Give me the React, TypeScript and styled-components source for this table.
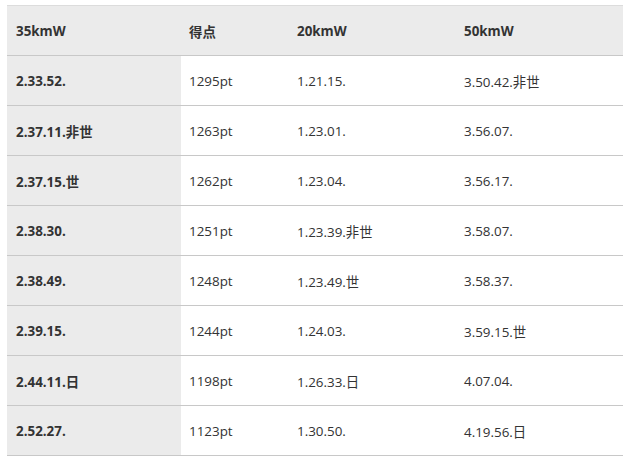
import React from "react";
import styled, { createGlobalStyle } from "styled-components";

const Global = createGlobalStyle`
  html, body { margin: 0; padding: 0; background: #fff; }
  body { font-family: "Open Sans", "Noto Sans CJK JP", sans-serif; }
`;

const Wrap = styled.div`
  padding: 5px 7px 0 7px;
`;

const Table = styled.table`
  width: 616px;
  border-collapse: collapse;
  table-layout: fixed;
  border-top: 1px solid #dcdcdc;
  font-size: 13.4px;
  color: #333;
`;

const Th = styled.th<{ $w: number }>`
  width: ${(p) => p.$w}px;
  height: 50px;
  padding: 0 8px;
  text-align: left;
  font-weight: 700;
  background: #ebebeb;
  border-bottom: 1px solid #c8c8c8;
  box-sizing: border-box;
`;

const Td = styled.td<{ $head?: boolean }>`
  height: 50px;
  padding: 0 8px;
  padding-left: ${(p) => (p.$head ? 9 : 8)}px;
  text-align: left;
  font-weight: ${(p) => (p.$head ? 700 : 400)};
  background: ${(p) => (p.$head ? "#ebebeb" : "#fff")};
  border-bottom: 1px solid #c8c8c8;
  box-sizing: border-box;
  white-space: nowrap;
`;

const HeadFirst = styled(Th)`
  padding-left: 9px;
`;

const rows: [string, string, string, string][] = [
  ["2.33.52.", "1295pt", "1.21.15.", "3.50.42.非世"],
  ["2.37.11.非世", "1263pt", "1.23.01.", "3.56.07."],
  ["2.37.15.世", "1262pt", "1.23.04.", "3.56.17."],
  ["2.38.30.", "1251pt", "1.23.39.非世", "3.58.07."],
  ["2.38.49.", "1248pt", "1.23.49.世", "3.58.37."],
  ["2.39.15.", "1244pt", "1.24.03.", "3.59.15.世"],
  ["2.44.11.日", "1198pt", "1.26.33.日", "4.07.04."],
  ["2.52.27.", "1123pt", "1.30.50.", "4.19.56.日"],
];

export default function App() {
  return (
    <>
      <Global />
      <Wrap>
        <Table>
          <thead>
            <tr>
              <HeadFirst $w={174}>35kmW</HeadFirst>
              <Th $w={108}>得点</Th>
              <Th $w={167}>20kmW</Th>
              <Th $w={167}>50kmW</Th>
            </tr>
          </thead>
          <tbody>
            {rows.map((r) => (
              <tr key={r[0]}>
                <Td $head>{r[0]}</Td>
                <Td>{r[1]}</Td>
                <Td>{r[2]}</Td>
                <Td>{r[3]}</Td>
              </tr>
            ))}
          </tbody>
        </Table>
      </Wrap>
    </>
  );
}
